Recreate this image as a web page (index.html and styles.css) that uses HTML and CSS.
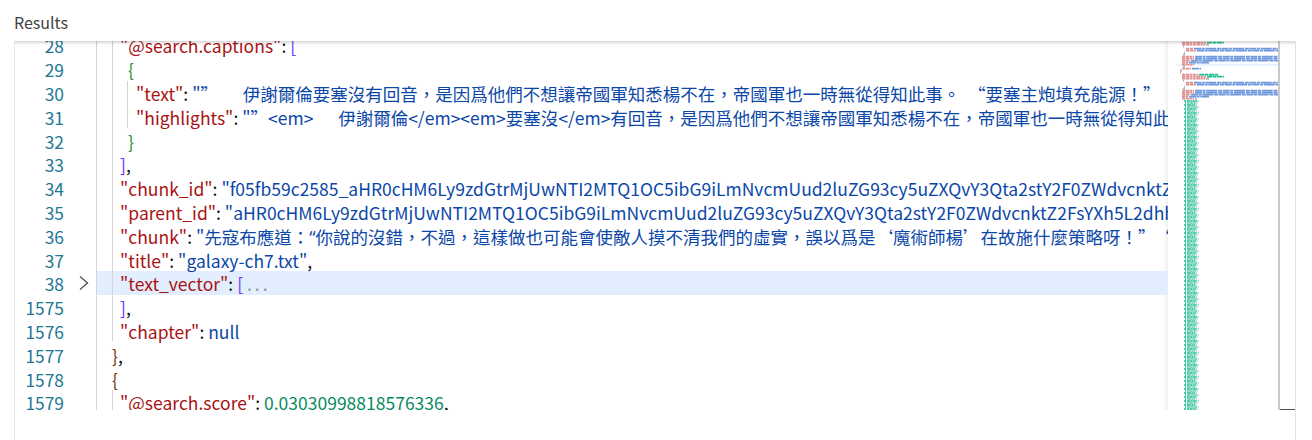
FILE: index.html
```html
<!DOCTYPE html>
<html lang="zh-Hant">
<head>
<meta charset="utf-8">
<title>Results</title>
<link rel="stylesheet" href="styles.css">
</head>
<body>
<h2 class="title">Results</h2>
<section class="panel">
  <div class="editor">
    <div class="gutter">
      <div class="num">28</div><div class="num">29</div><div class="num">30</div><div class="num">31</div><div class="num">32</div><div class="num">33</div><div class="num">34</div><div class="num">35</div><div class="num">36</div><div class="num">37</div>
      <div class="num">38<svg class="chev" width="12" height="16" viewBox="0 0 12 16"><path d="M2 1.5 L9.5 8 L2 14.5" fill="none" stroke="#555" stroke-width="1.4"/></svg></div>
      <div class="num">1575</div><div class="num">1576</div><div class="num">1577</div><div class="num">1578</div><div class="num">1579</div>
    </div>
    <div class="code">
      <div class="guide g1"></div><div class="guide g2"></div><div class="guide g3"></div>
      <div class="lines">
      <div class="line i2"><span class="k">"@search.captions"</span>: <span class="b1">[</span></div>
      <div class="line i3"><span class="b2">{</span></div>
      <div class="line i4"><span class="k">"text"</span>: <span class="s">"”<span class="gap">　　</span>伊謝爾倫要塞沒有回音，是因爲他們不想讓帝國軍知悉楊不在，帝國軍也一時無從得知此事。  “要塞主炮填充能源！”</span></div>
      <div class="line i4"><span class="k">"highlights"</span>: <span class="s">"”&lt;em&gt;<span class="gap">　　</span>伊謝爾倫&lt;/em&gt;&lt;em&gt;要塞沒&lt;/em&gt;有回音，是因爲他們不想讓帝國軍知悉楊不在，帝國軍也一時無從得知此事。</span></div>
      <div class="line i3"><span class="b2">}</span></div>
      <div class="line i2"><span class="b1">]</span>,</div>
      <div class="line i2"><span class="k">"chunk_id"</span>: <span class="s">"f05fb59c2585_aHR0cHM6Ly9zdGtrMjUwNTI2MTQ1OC5ibG9iLmNvcmUud2luZG93cy5uZXQvY3Qta2stY2F0ZWdvcnktZ2FsYXh5L2dhbGF4eS1jaDcudHh0</span></div>
      <div class="line i2"><span class="k">"parent_id"</span>: <span class="s">"aHR0cHM6Ly9zdGtrMjUwNTI2MTQ1OC5ibG9iLmNvcmUud2luZG93cy5uZXQvY3Qta2stY2F0ZWdvcnktZ2FsYXh5L2dhbGF4eS1jaDcudHh0</span></div>
      <div class="line i2"><span class="k">"chunk"</span>: <span class="s">"先寇布應道：<span class="q">“</span>你說的沒錯，不過，這樣做也可能會使敵人摸不清我們的虛實，誤以爲是‘魔術師楊’在故施什麼策略呀！”“這</span></div>
      <div class="line i2"><span class="k">"title"</span>: <span class="s">"galaxy-ch7.txt"</span>,</div>
      <div class="line i2 hl"><span class="k">"text_vector"</span>: <span class="b1">[</span> <span class="dots">...</span></div>
      <div class="line i2"><span class="b1">]</span>,</div>
      <div class="line i2"><span class="k">"chapter"</span>: <span class="s">null</span></div>
      <div class="line i1"><span class="b3">}</span>,</div>
      <div class="line i1"><span class="b3">{</span></div>
      <div class="line i2"><span class="k">"@search.score"</span>: <span class="n">0.03030998818576336</span>,</div>
      </div>
    </div>
    <div class="minimap">
      <svg class="map" width="110" height="369" viewBox="0 0 110 369">
        <defs>
          <pattern id="vec" width="40" height="12" patternUnits="userSpaceOnUse" x="15" y="59">
            <path d="M1 1H3" stroke="#0bb583"/><path d="M4 1H14" stroke="#14bd8c" stroke-dasharray="3 .4 2 .4"/><path d="M14 1H16" stroke="#b9dcd2"/>
            <path d="M2 3H3" stroke="#0bb583"/><path d="M4 3H13" stroke="#4fcca8" stroke-dasharray="2 .4 4 .4"/><path d="M13 3H15" stroke="#c4dfd7"/>
            <path d="M1 5H3" stroke="#0bb583"/><path d="M4 5H12" stroke="#14bd8c" stroke-dasharray="4 .4 2 .4"/><path d="M12 5H14" stroke="#b9dcd2"/>
            <path d="M2 7H3" stroke="#0bb583"/><path d="M4 7H14" stroke="#4fcca8" stroke-dasharray="3 .4 3 .4"/><path d="M14 7H16" stroke="#c4dfd7"/>
            <path d="M1 9H3" stroke="#0bb583"/><path d="M4 9H13" stroke="#14bd8c" stroke-dasharray="2 .4 3 .4"/><path d="M13 9H15" stroke="#b9dcd2"/>
            <path d="M2 11H3" stroke="#0bb583"/><path d="M4 11H12" stroke="#4fcca8" stroke-dasharray="4 .4 2 .4"/><path d="M12 11H14" stroke="#c4dfd7"/>
          </pattern>
        </defs>
        <rect x="8" y="22.7" width="102" height="2" fill="#e5f0fd"/>
        <g class="blurred">
        <path class="mk" d="M14 1.7H38M14 3.7H37M18 7.7H25M18 9.7H28M14 15.7H26M14 17.7H26M14 19.7H22M14 21.7H20M14 23.7H26M14 27.7H23M14 33.7H30M14 35.7H38M14 37.7H37M18 41.7H25M18 43.7H28M14 49.7H26M14 51.7H26M14 53.7H22M14 55.7H20M14 57.7H26"/>
        <path class="mg" d="M39 1.7H56M31 33.7H50M39 35.7H56"/>
        <path class="ms" d="M26 7.7H110M29 9.7H110M27 15.7H110M27 17.7H110M23 19.7H110M21 21.7H41M24 27.7H33M26 41.7H110M29 43.7H110M27 49.7H110M27 51.7H110M23 53.7H110M21 55.7H41"/>
        <path class="mp" d="M38 3.7H41M15 5.7H16M16 11.7H17M15 13.7H17M15 25.7H17M12 29.7H14M12 31.7H13M38 37.7H41M15 39.7H16M16 45.7H17M15 47.7H17M27 57.7H29"/>
        <rect x="15" y="59" width="16" height="310" fill="url(#vec)"/>
        </g>
      </svg>
    </div>
    <div class="scrollbar"><div class="thumb"></div></div>
  </div>
</section>
</body>
</html>
```
FILE: styles.css
```css
html, body { margin: 0; padding: 0; background: #fff; }
body {
  width: 1312px; height: 440px; overflow: hidden;
  font-family: "Noto Sans CJK JP", "Noto Sans", sans-serif;
  text-spacing-trim: space-all;
  text-autospace: no-autospace;
}
.title {
  margin: 0; padding: 11px 0 0 14px; height: 30px;
  font-size: 16px; font-weight: 400; line-height: 22px; color: #424242;
}
.panel {
  margin-left: 14px; width: 1282px; height: 399px;
  border-left: 1px solid #e6e6e6; border-right: 1px solid #e0e0e0;
  box-sizing: border-box; background: #fff;
}
.editor { position: relative; display: flex; height: 369px; overflow: hidden; }
.editor::before {
  content: ""; position: absolute; z-index: 3; left: 0; right: 0; top: 0; height: 4px;
  background: linear-gradient(rgba(0,0,0,.16), rgba(0,0,0,0));
}
.gutter { width: 82px; flex: none; box-sizing: border-box; margin-top: -7.6px; height: 400px; border-right: 1px solid #d4d4d4; }
.num { position: relative; height: 23.8px; line-height: 25.4px; font-size: 17.4px; color: #237893; text-align: right; padding-right: 32px; }
.chev { position: absolute; left: 63px; top: 4px; }
.code { position: relative; width: 1071px; flex: none; overflow: hidden; font-size: 17.5px; color: #111; box-shadow: inset -6px 0 6px -6px rgba(0,0,0,.12); }
.lines { margin-top: -7.6px; }
.line { height: 23.8px; line-height: 25.4px; white-space: pre; }
.i1 { padding-left: 15px; } .i2 { padding-left: 23px; } .i3 { padding-left: 31px; } .i4 { padding-left: 39px; }
.hl { background: #e2eefd; }
.k { color: #a81212; } .s { color: #0b47a8; } .n { color: #098a5e; }
.gap { font-size: 12.4px; }
.q { font-family: "Noto Sans", sans-serif; }
.b1 { color: #6a35ff; } .b2 { color: #319331; } .b3 { color: #7b3814; }
.dots { color: #8f8f8f; letter-spacing: 3px; }
.guide { position: absolute; width: 1px; background: #d4d4d4; z-index: 1; }
.g1 { left: 15px; top: 0; height: 300px; }
.g2 { left: 15px; top: 349px; height: 20px; }
.g3 { left: 30px; top: 40px; height: 47px; }
.minimap { width: 110px; flex: none; border-right: 2px solid #c9c9c9; }
.map { display: block; }
.blurred { filter: blur(.3px); }
.map path { fill: none; stroke-width: 1.7; }
.mk { stroke: #df8f8f; stroke-dasharray: 3 .6 4 .5 2 .6; }
.mg { stroke: #1cc08f; stroke-dasharray: 5 .5 4 .6; }
.ms { stroke: #6f98dc; stroke-dasharray: 7 .6 3 .7 11 .8 4 .6; }
.mp { stroke: #a8a8a8; }
.scrollbar { flex: 1; position: relative; background: #fff; }
.thumb { position: absolute; left: 0; right: 0; bottom: 0; height: 1px; background: #555; }
```
